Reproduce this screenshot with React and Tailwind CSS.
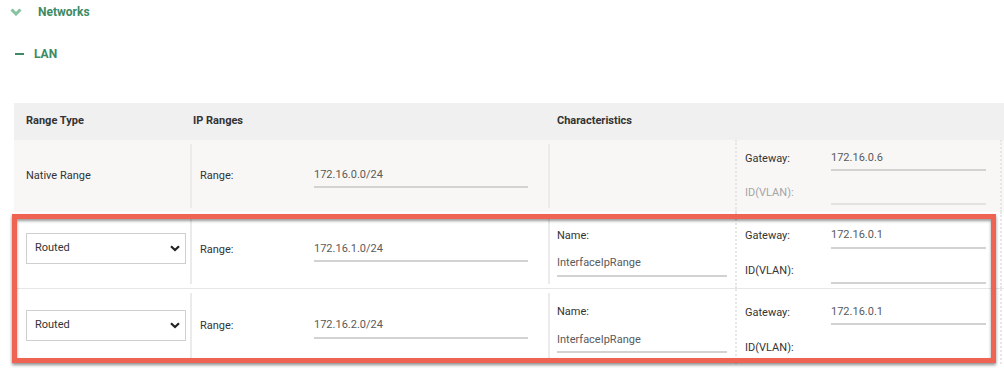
import React from 'react';

const RANGES = [
  { range: '172.16.1.0/24', name: 'InterfaceIpRange', gateway: '172.16.0.1' },
  { range: '172.16.2.0/24', name: 'InterfaceIpRange', gateway: '172.16.0.1' },
];

const Field = ({ label, value, labelW = 'w-[86px]', inputW = 'w-[155px]', muted = false }) => (
  <div className="flex items-center">
    <span className={`${labelW} ${muted ? 'text-[#a5a5a5]' : 'text-[#333]'}`}>{label}</span>
    <div
      className={`${inputW} h-[24px] flex items-center border-b-2 ${
        muted ? 'border-[#e2e2e2]' : 'border-[#d2d2d2]'
      } text-[#5a5a5a]`}
    >
      {value}
    </div>
  </div>
);

const Chevron = () => (
  <svg width="12" height="8" viewBox="0 0 12 8" className="shrink-0">
    <polyline points="1.5,1.5 6,6 10.5,1.5" fill="none" stroke="#86c3a3" strokeWidth="3" />
  </svg>
);

const SelectBox = () => (
  <div className="w-[160px] h-[31px] border border-[#cfcfcf] bg-white flex items-center justify-between pl-[8px] pr-[5px] text-[#333]">
    <span>Routed</span>
    <svg width="10" height="7" viewBox="0 0 10 7">
      <polyline points="1,1.2 5,5 9,1.2" fill="none" stroke="#222" strokeWidth="2.2" />
    </svg>
  </div>
);

const Row = ({ children, className = '' }) => (
  <div className={`flex ${className}`}>{children}</div>
);

export default function App() {
  return (
    <div
      className="w-[1004px] h-[368px] overflow-hidden bg-white text-[11px]"
      style={{ fontFamily: 'Roboto, "Liberation Sans", sans-serif' }}
    >
      <div className="flex items-center h-[24px] pl-[10px] gap-[16px] font-bold text-[12px] text-[#3d8a63]">
        <Chevron />
        <span>Networks</span>
      </div>
      <div className="flex items-center h-[20px] mt-[20px] pl-[15px] gap-[10px] font-bold text-[12px] text-[#3d8a63]">
        <span className="w-[9px] h-[2px] bg-[#3d8a63]" />
        <span>LAN</span>
      </div>

      <div className="ml-[14px] mt-[39px] w-[1000px]">
        {/* header */}
        <div className="flex h-[37px] items-center bg-[#f0f0f0] font-bold text-[#333]">
          <div className="w-[176px] pl-[12px]">Range Type</div>
          <div className="w-[358px] pl-[3px]">IP Ranges</div>
          <div className="pl-[9px]">Characteristics</div>
        </div>

        {/* native range */}
        <Row className="h-[72px] bg-[#f8f7f6]">
          <div className="w-[176px] pl-[12px] flex items-center text-[#333]">Native Range</div>
          <div className="w-[358px] my-[4px] border-l-2 border-[#ebebeb] pl-[8px] flex items-center">
            <Field label="Range:" value="172.16.0.0/24" labelW="w-[114px]" inputW="w-[214px]" />
          </div>
          <div className="w-[187px] my-[4px] border-l-2 border-[#ebebeb]" />
          <div className="w-[265px] border-l-2 border-dotted border-[#e6e6e6] pl-[8px] flex flex-col justify-center gap-[10px]">
            <Field label="Gateway:" value="172.16.0.6" />
            <Field label="ID(VLAN):" value="" muted />
          </div>
          <div className="border-l-2 border-dotted border-[#e6e6e6]" />
        </Row>

        {/* routed ranges, framed */}
        <div className="relative">
          {RANGES.map((r, i) => (
            <Row
              key={i}
              className={`h-[76px] bg-white ${i > 0 ? 'border-t border-[#e6e6e6]' : ''}`}
            >
              <div className="w-[176px] pl-[12px] pb-[3px] flex items-center">
                <SelectBox />
              </div>
              <div className="w-[358px] my-[4px] border-l-2 border-[#ebebeb] pl-[8px] flex items-center">
                <Field label="Range:" value={r.range} labelW="w-[114px]" inputW="w-[214px]" />
              </div>
              <div className="w-[187px] my-[4px] border-l-2 border-[#ebebeb] pl-[7px] pt-[4px] flex flex-col justify-center">
                <span className="text-[#333] leading-[16px]">Name:</span>
                <div className="mt-[9px] w-[170px] h-[24px] flex items-center border-b-2 border-[#d2d2d2] text-[#5a5a5a]">
                  {r.name}
                </div>
              </div>
              <div className="w-[265px] border-l-2 border-dotted border-[#e6e6e6] pl-[8px] pt-[8px] flex flex-col justify-center gap-[11px]">
                <Field label="Gateway:" value={r.gateway} />
                <Field label="ID(VLAN):" value="" />
              </div>
              <div className="border-l-2 border-dotted border-[#e6e6e6]" />
            </Row>
          ))}
          <div
            className="pointer-events-none absolute left-[-2px] top-[2px] w-[984px] h-[149px] border-[5px] border-[#ee6352]"
            style={{
              boxShadow: '0 2px 3px rgba(0,0,0,0.45), inset 0 2px 3px rgba(0,0,0,0.4)',
            }}
          />
        </div>
      </div>
    </div>
  );
}
